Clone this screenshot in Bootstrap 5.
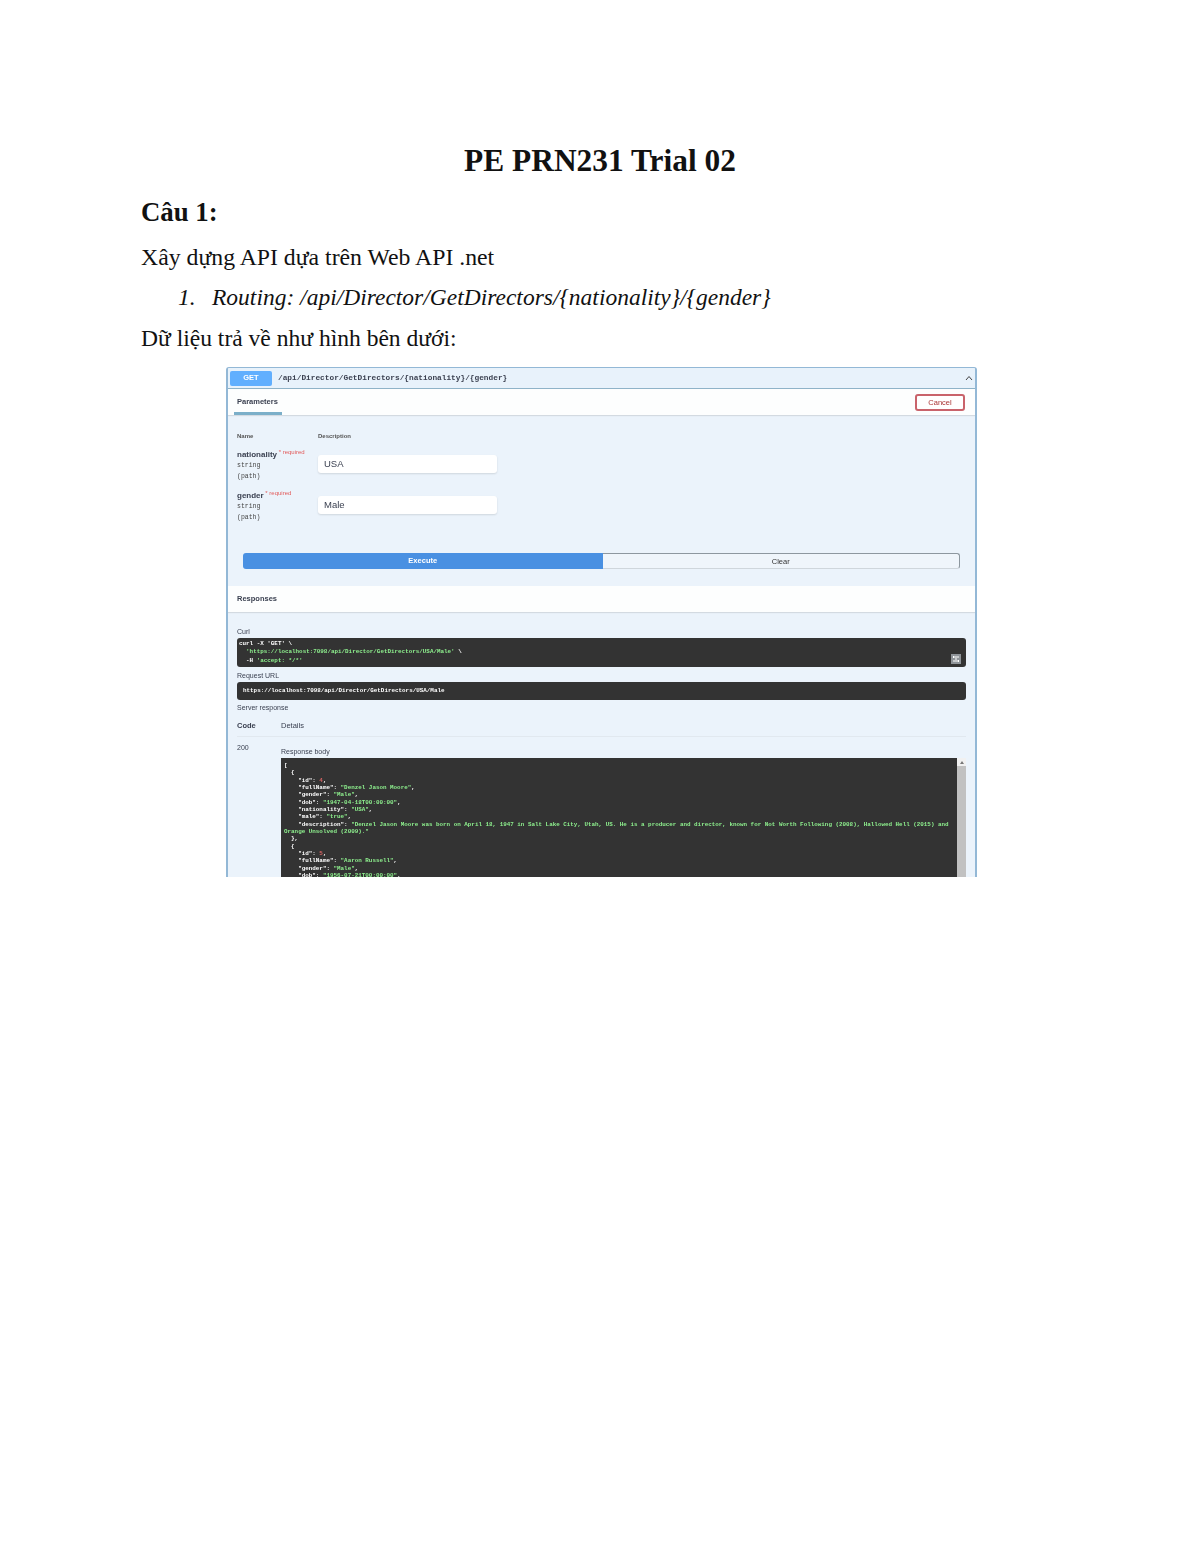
<!DOCTYPE html>
<html lang="vi">
<head>
<meta charset="utf-8">
<title>PE PRN231 Trial 02</title>
<link href="https://cdn.jsdelivr.net/npm/bootstrap@5.3.0/dist/css/bootstrap.min.css" rel="stylesheet">
<style>
html,body{background:#fff;height:1553px;overflow:hidden}
body{font-family:"Liberation Serif","Times New Roman",serif;color:#111}
.doc-page{padding:142px 141px 0}
.doc-title{font-size:31.4px;font-weight:700;line-height:38px;margin:0 0 13px;text-align:center}
.doc-head{font-size:26.8px;font-weight:700;line-height:38px;margin:0 0 11px}
.doc-line{font-size:23.6px;line-height:30px;margin:0 0 11px}
.doc-first{margin-bottom:10px;font-size:23.75px}
.doc-last{font-size:23.55px}
.doc-item{font-style:italic;margin-left:37px;font-size:23.5px}
.doc-num{width:34px;flex:none}
.swg{margin:14px 0 0 85px;width:751px;height:510px;overflow:hidden;background:#ebf3fb;border:solid #93b8d6;border-width:1px 2px 0 2px;border-radius:3px 3px 0 0;font-family:"Liberation Sans",Arial,sans-serif;font-size:7px;color:#3b4151;filter:blur(.45px)}
.swg-sum{height:21px;border-bottom:1px solid #8fb3c8;background:#e8f2fb;padding:0 2px}
.swg-get{width:42px;height:15px;background:#61affe;color:#fff;font-weight:700;font-size:7.5px;border-radius:2px;display:flex;align-items:center;justify-content:center}
.swg-path{font-family:"Liberation Mono",monospace;font-weight:700;font-size:7.8px;margin:2px 0 0 6px;color:#3b4151}
.swg-bar{background:#fdfefe;box-shadow:0 1px 1px rgba(0,0,0,.1)}
.swg-tabs{height:26px;padding:0 10px 0 6px}
.swg-tab{width:48px;height:26px;border-bottom:3px solid #7bafc9;padding:8px 0 0 3px;font-weight:700;font-size:7.5px;line-height:10px}
.btn.swg-cancel{width:50px;height:17px;padding:0;font-size:7.5px;line-height:13px;border:2px solid #c9636b;color:#a33;background:#fff;border-radius:3px;--bs-btn-hover-bg:#fff}
.swg-params{height:171px;padding:16px 0 0 9px}
.swg-th{height:10px;line-height:10px;font-weight:700;font-size:6px;color:#555}
.swg-col1{width:81px;flex:none}
.swg-row{height:41px;margin-top:0}
.swg-rows{margin-top:8px}
.swg-nm{font-weight:700;font-size:8px;line-height:12px;white-space:nowrap}
.swg-nm sup{color:#e25b5b;font-size:6px;font-weight:400;top:-3px}
.swg-sub{font-size:6.5px;line-height:10.5px;color:#444;font-family:"Liberation Mono",monospace}
.form-control.swg-in{width:179px;height:18px;min-height:0;padding:0 6px;font-size:9.5px;line-height:18px;border:0;border-radius:3px;background:#fff;color:#3b4151;box-shadow:0 1px 2px rgba(0,0,0,.12);margin-top:6px}
.swg-acts{margin:22px 15px 0 6px}
.btn.swg-exec{width:360px;height:16px;padding:0;font-size:7.5px;font-weight:700;line-height:16px;background:#4990e2;color:#fff;border:0;border-radius:3px 0 0 3px}
.btn.swg-clear{width:358px;height:16px;padding:0;font-size:7.5px;line-height:13px;background:#eff5fb;color:#333;border:solid #8d979f;border-width:1px 1px 1px 0;border-bottom-color:#cfd6dc;border-radius:0 3px 3px 0}
.swg-resp{height:26px;padding:0 9px;font-weight:700;font-size:7.5px;line-height:26px}
.swg-body{padding:14px 9px 0}
.swg-lbl{font-size:7px;line-height:12px;height:12px}
.swg-dark{background:#333;border-radius:3px;color:#fff;font-family:"Liberation Mono",monospace;font-weight:700;font-size:5.9px;position:relative;margin:0;white-space:pre}
.swg-curl{height:29px;padding:1.5px 2px;line-height:8.6px;margin-top:0}
.swg-reqlbl{margin-top:3px}
.swg-url{height:18px;line-height:18px;padding:0 6px;margin-top:0}
.swg-g{color:#8ef08e}
.swg-copy{position:absolute;right:5px;bottom:3px;width:10px;height:10px}
.swg-srv{margin-top:2px}
.swg-hd{height:22px;margin-top:1px;line-height:22px;border-bottom:1px solid #e1e8ef;font-weight:700;font-size:7.5px}
.swg-det{font-weight:400;font-size:7.5px}
.swg-code{width:44px;flex:none}
.swg-status{font-size:7px;line-height:12px;padding-top:5px}
.swg-bl{font-size:7px;line-height:12px;margin-top:9px}
.swg-json-wrap{height:130px;margin-top:0}
.swg-json{flex:1 1 auto;min-width:0;background:#333;color:#fff;font-family:"Liberation Mono",monospace;font-weight:700;font-size:5.9px;line-height:7.35px;padding:4px 3px 0;overflow:hidden}
.swg-json div{white-space:pre-wrap;word-break:break-word}
.swg-n{color:#d36363}
.swg-scroll{width:9px;flex:none;background:#f1f1f1;position:relative;padding-top:8px}
.swg-arrow{position:absolute;left:2.5px;top:3px;width:0;height:0;border:2px solid transparent;border-bottom:3px solid #777;border-top:0}
.swg-thumb{height:100%;background:#c1c1c1}
</style>
</head>
<body>
<main class="doc-page">
  <h1 class="doc-title">PE PRN231 Trial 02</h1>
  <h2 class="doc-head">Câu 1:</h2>
  <p class="doc-line doc-first">Xây dựng API dựa trên Web API .net</p>
  <p class="doc-line doc-item d-flex"><span class="doc-num">1.</span><span>Routing: /api/Director/GetDirectors/{nationality}/{gender}</span></p>
  <p class="doc-line doc-last mb-0">Dữ liệu trả về như hình bên dưới:</p>

  <section class="swg">
    <div class="swg-sum d-flex align-items-center">
      <span class="swg-get">GET</span>
      <span class="swg-path">/api/Director/GetDirectors/{nationality}/{gender}</span>
      <svg class="ms-auto" width="8" height="6" viewBox="0 0 8 6"><path d="M1 5 4 1.5 7 5" fill="none" stroke="#444" stroke-width="1"/></svg>
    </div>
    <div class="swg-bar swg-tabs d-flex align-items-center justify-content-between">
      <div class="swg-tab">Parameters</div>
      <button type="button" class="btn swg-cancel">Cancel</button>
    </div>
    <div class="swg-params">
      <div class="d-flex swg-th"><div class="swg-col1">Name</div><div>Description</div></div>
      <div class="swg-rows">
        <div class="d-flex swg-row">
          <div class="swg-col1"><div class="swg-nm">nationality<sup> * required</sup></div><div class="swg-sub">string</div><div class="swg-sub">(path)</div></div>
          <input class="form-control swg-in" type="text" value="USA" aria-label="nationality">
        </div>
        <div class="d-flex swg-row">
          <div class="swg-col1"><div class="swg-nm">gender<sup> * required</sup></div><div class="swg-sub">string</div><div class="swg-sub">(path)</div></div>
          <input class="form-control swg-in" type="text" value="Male" aria-label="gender">
        </div>
      </div>
      <div class="d-flex swg-acts">
        <button type="button" class="btn swg-exec">Execute</button>
        <button type="button" class="btn swg-clear">Clear</button>
      </div>
    </div>
    <div class="swg-bar swg-resp">Responses</div>
    <div class="swg-body">
      <div class="swg-lbl">Curl</div>
      <div class="swg-dark swg-curl">curl -X 'GET' \
  <span class="swg-g">'https://localhost:7098/api/Director/GetDirectors/USA/Male'</span> \
  -H <span class="swg-g">'accept: */*'</span><svg class="swg-copy" viewBox="0 0 10 10"><rect width="10" height="10" fill="#8f9499"/><path d="M2 3h6M3 2 2 3l1 1M2 7h6M7 6l1 1-1 1M4 5h2" stroke="#fff" fill="none"/></svg></div>
      <div class="swg-lbl swg-reqlbl">Request URL</div>
      <div class="swg-dark swg-url">https://localhost:7098/api/Director/GetDirectors/USA/Male</div>
      <div class="swg-lbl swg-srv">Server response</div>
      <div class="d-flex swg-hd"><div class="swg-code">Code</div><div class="swg-det">Details</div></div>
      <div class="d-flex">
        <div class="swg-code swg-status">200</div>
        <div class="flex-grow-1 min-w-0">
          <div class="swg-bl">Response body</div>
          <div class="d-flex swg-json-wrap">
            <div class="swg-json">
<div>[</div>
<div>  {</div>
<div>    "id": <span class="swg-n">4</span>,</div>
<div>    "fullName": <span class="swg-g">"Denzel Jason Moore"</span>,</div>
<div>    "gender": <span class="swg-g">"Male"</span>,</div>
<div>    "dob": <span class="swg-g">"1947-04-18T00:00:00"</span>,</div>
<div>    "nationality": <span class="swg-g">"USA"</span>,</div>
<div>    "male": <span class="swg-g">"true"</span>,</div>
<div>    "description": <span class="swg-g">"Denzel Jason Moore was born on April 18, 1947 in Salt Lake City, Utah, US. He is a producer and director, known for Not Worth Following (2008), Hallowed Hell (2015) and Orange Unsolved (2009)."</span></div>
<div>  },</div>
<div>  {</div>
<div>    "id": <span class="swg-n">5</span>,</div>
<div>    "fullName": <span class="swg-g">"Aaron Russell"</span>,</div>
<div>    "gender": <span class="swg-g">"Male"</span>,</div>
<div>    "dob": <span class="swg-g">"1956-07-21T00:00:00"</span>,</div>
            </div>
            <div class="swg-scroll"><span class="swg-arrow"></span><div class="swg-thumb"></div></div>
          </div>
        </div>
      </div>
    </div>
  </section>
</main>
</body>
</html>
